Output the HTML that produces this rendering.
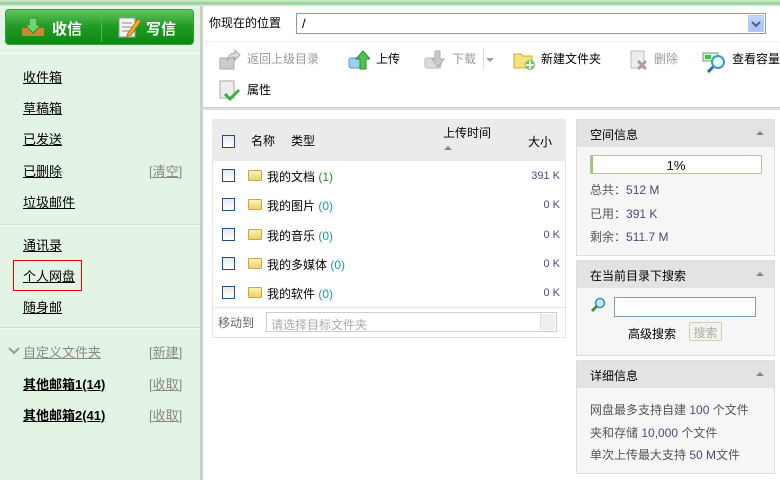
<!DOCTYPE html>
<html><head><meta charset="utf-8"><style>
*{margin:0;padding:0;box-sizing:border-box}
body{width:780px;height:480px;overflow:hidden;font-family:"Liberation Sans","Noto Sans CJK SC",sans-serif;font-size:12px;color:#000;background:#fff;position:relative}
.a{position:absolute}
u{text-decoration:underline}
.side{left:0;top:0;width:200px;height:480px;background:#e4f4e4}
.vline{left:200px;top:0;width:3px;height:480px;background:#c9cfc9}
.topg{left:0;top:0;width:780px;height:6px;background:linear-gradient(#d4ecd4,#8fd08f 60%,#d8f0d8)}
.btns{left:5px;top:9px;width:189px;height:36px;border-radius:4px;background:linear-gradient(#5fc45f,#1f9a22 50%,#0c8a12);border:1px solid #3a9c3a;color:#fff;font-size:15px;font-weight:bold}
.nav{left:23px;font-size:13px;color:#000;text-decoration:underline}
.hr{left:0;width:200px;height:2px;background:#f4fbf4;border-top:1px solid #cfe3cf}
.br{color:#888;font-size:13px}
.tb{font-size:12px;color:#000}
.g{color:#999}
.chk{width:13px;height:13px;border:1px solid #1f4e8c;background:linear-gradient(#e8e8e8,#fff)}
.fold{width:14px;height:11px;background:linear-gradient(#fdf2b0,#ecd06a);border:1px solid #c8a840;border-radius:1px}
.row{left:212px;width:354px;height:29px}
.panel{left:576px;width:199px;background:#f6f6f6;border:1px solid #ddd}
.ph{height:27px;background:#e3e3e3;padding:6px 0 0 13px;font-size:12px}
.tri{position:absolute;right:10px;top:11px;width:0;height:0;border-left:4px solid transparent;border-right:4px solid transparent;border-bottom:4px solid #888}
.blue{color:#4a4a7a}
</style></head><body>
<div class="a side"></div>
<div class="a vline"></div>
<div class="a topg"></div>
<div class="a btns">
 <div class="a" style="left:95px;top:2px;width:1px;height:30px;background:#54b154"></div>
 <svg class="a" style="left:14px;top:6px" width="26" height="22"><path d="M2 12h22v8H2z" fill="#c98a2e"/><path d="M9 2h8v7h4l-8 8-8-8h4z" fill="#6fd36f" stroke="#2a8a2a"/></svg>
 <span class="a" style="left:46px;top:8px">收信</span>
 <svg class="a" style="left:110px;top:5px" width="26" height="24"><rect x="3" y="3" width="16" height="19" fill="#f4f4f4" stroke="#999"/><path d="M6 8h10M6 12h10M6 16h8" stroke="#888"/><path d="M12 18l10-14 3 2-10 14-4 1z" fill="#f2b030" stroke="#b07010"/></svg>
 <span class="a" style="left:140px;top:8px">写信</span>
</div>
<div class="a" style="left:0;top:52px;width:200px;height:2px;background:#f2faf2"></div>
<div class="a nav" style="top:67px">收件箱</div>
<div class="a nav" style="top:98px">草稿箱</div>
<div class="a nav" style="top:129px">已发送</div>
<div class="a nav" style="top:161px">已删除</div><div class="a br" style="left:149px;top:161px">[<u>清空</u>]</div>
<div class="a nav" style="top:192px">垃圾邮件</div>
<div class="a hr" style="top:224px"></div>
<div class="a nav" style="top:235px">通讯录</div>
<div class="a" style="left:13px;top:260px;width:69px;height:31px;border:1px solid #e00"></div>
<div class="a nav" style="top:266px">个人网盘</div>
<div class="a nav" style="top:297px">随身邮</div>
<div class="a hr" style="top:327px"></div>
<svg class="a" style="left:8px;top:347px" width="12" height="8"><path d="M1 1l5 5 5-5" stroke="#999" stroke-width="2" fill="none"/></svg>
<div class="a nav" style="top:342px;color:#888">自定义文件夹</div><div class="a br" style="left:149px;top:342px">[<u>新建</u>]</div>
<div class="a nav" style="top:374px;font-weight:bold">其他邮箱1(14)</div><div class="a br" style="left:149px;top:374px">[<u>收取</u>]</div>
<div class="a nav" style="top:405px;font-weight:bold">其他邮箱2(41)</div><div class="a br" style="left:149px;top:405px">[<u>收取</u>]</div>

<div class="a" style="left:209px;top:14px;font-size:12px">你现在的位置</div>
<div class="a" style="left:296px;top:13px;width:470px;height:21px;border:1px solid #7f9db9;padding:2px 5px;font-size:13px">/
 <div class="a" style="right:1px;top:1px;width:16px;height:17px;background:linear-gradient(#c6d6fb,#a8bff5);border:1px solid #b4c8f4"><svg width="14" height="15"><path d="M3 6l4 4 4-4" stroke="#4d6185" stroke-width="2" fill="none"/></svg></div></div>
<div class="a" style="left:202px;top:41px;width:578px;height:1px;background:#eee"></div>

<svg class="a" style="left:219px;top:49px" width="22" height="22"><rect x="1" y="9" width="14" height="11" fill="#ccc" stroke="#aaa"/><path d="M8 12q2-8 8-8v-3l5 5-5 5v-3q-5 0-8 4z" fill="#ddd" stroke="#aaa"/></svg>
<div class="a tb g" style="left:247px;top:50px">返回上级目录</div>
<svg class="a" style="left:348px;top:49px" width="22" height="22"><rect x="1" y="9" width="14" height="10" rx="2" fill="#9cd0f0" stroke="#5a9acb"/><path d="M12 20V10H8l7-8 7 8h-4v10z" fill="#4fc44f" stroke="#2a8a2a"/></svg>
<div class="a tb" style="left:376px;top:50px">上传</div>
<svg class="a" style="left:424px;top:49px" width="22" height="22"><rect x="1" y="9" width="16" height="10" rx="2" fill="#ddd" stroke="#bbb"/><path d="M11 2h5v8h4l-6 8-6-8h3z" fill="#ccc" stroke="#aaa"/></svg>
<div class="a tb g" style="left:452px;top:50px">下载</div>
<div class="a" style="left:483px;top:48px;width:1px;height:22px;background:#ddd"></div>
<div class="a" style="left:486px;top:58px;border-left:4px solid transparent;border-right:4px solid transparent;border-top:4px solid #999"></div>
<svg class="a" style="left:513px;top:49px" width="24" height="22"><path d="M1 5h7l2 2h9v12H1z" fill="#f7e27a" stroke="#c8a840"/><circle cx="17" cy="16" r="5" fill="#5ccc5c"/><path d="M17 12v8M13 16h8" stroke="#fff" stroke-width="2"/></svg>
<div class="a tb" style="left:541px;top:50px">新建文件夹</div>
<svg class="a" style="left:629px;top:49px" width="22" height="22"><rect x="2" y="2" width="13" height="17" fill="#eee" stroke="#bbb"/><path d="M9 12l8 8M17 12l-8 8" stroke="#b99" stroke-width="3"/></svg>
<div class="a tb g" style="left:654px;top:50px">删除</div>
<svg class="a" style="left:702px;top:49px" width="26" height="24"><rect x="1" y="4" width="15" height="8" fill="#cfd" stroke="#888"/><rect x="3" y="6" width="6" height="4" fill="#3c3"/><circle cx="16" cy="13" r="6" fill="#dff" stroke="#4a90c0" stroke-width="2"/><path d="M11 18l-5 5" stroke="#2a6ab0" stroke-width="3"/></svg>
<div class="a tb" style="left:732px;top:50px">查看容量</div>
<svg class="a" style="left:219px;top:80px" width="22" height="22"><rect x="1" y="1" width="14" height="17" fill="#eee" stroke="#aaa"/><path d="M6 14l5 5 9-9" stroke="#3bb33b" stroke-width="3" fill="none"/></svg>
<div class="a tb" style="left:247px;top:81px">属性</div>
<div class="a" style="left:202px;top:107px;width:578px;height:3px;background:#e0e0e0;border-top:1px solid #ccc"></div>

<div class="a" style="left:212px;top:119px;width:354px;height:219px;border:1px solid #e3e3e3"></div>
<div class="a" style="left:212px;top:119px;width:354px;height:42px;background:#ebebeb"></div>
<div class="a chk" style="left:222px;top:135px"></div>
<div class="a" style="left:251px;top:132px">名称</div>
<div class="a" style="left:291px;top:132px">类型</div>
<div class="a" style="left:443px;top:124px">上传时间</div>
<div class="a" style="left:444px;top:146px;border-left:4px solid transparent;border-right:4px solid transparent;border-bottom:4px solid #888"></div>
<div class="a" style="left:528px;top:133px">大小</div>

<div class="a row" style="top:161px"><div class="a chk" style="left:10px;top:8px"></div><div class="a fold" style="left:36px;top:9px"></div><div class="a" style="left:55px;top:7px">我的文档 <span style="color:#2a8a2a">(1)</span></div><div class="a blue" style="right:6px;top:9px;font-size:11px">391 K</div></div>
<div class="a row" style="top:190px"><div class="a chk" style="left:10px;top:8px"></div><div class="a fold" style="left:36px;top:9px"></div><div class="a" style="left:55px;top:7px">我的图片 <span style="color:#1a9aa0">(0)</span></div><div class="a blue" style="right:6px;top:9px;font-size:11px">0 K</div></div>
<div class="a row" style="top:220px"><div class="a chk" style="left:10px;top:8px"></div><div class="a fold" style="left:36px;top:9px"></div><div class="a" style="left:55px;top:7px">我的音乐 <span style="color:#1a9aa0">(0)</span></div><div class="a blue" style="right:6px;top:9px;font-size:11px">0 K</div></div>
<div class="a row" style="top:249px"><div class="a chk" style="left:10px;top:8px"></div><div class="a fold" style="left:36px;top:9px"></div><div class="a" style="left:55px;top:7px">我的多媒体 <span style="color:#1a9aa0">(0)</span></div><div class="a blue" style="right:6px;top:9px;font-size:11px">0 K</div></div>
<div class="a row" style="top:278px"><div class="a chk" style="left:10px;top:8px"></div><div class="a fold" style="left:36px;top:9px"></div><div class="a" style="left:55px;top:7px">我的软件 <span style="color:#1a9aa0">(0)</span></div><div class="a blue" style="right:6px;top:9px;font-size:11px">0 K</div></div>
<div class="a" style="left:213px;top:307px;width:352px;height:1px;background:#e3e3e3"></div>
<div class="a" style="left:218px;top:314px;color:#666">移动到</div>
<div class="a" style="left:266px;top:312px;width:291px;height:20px;border:1px solid #ccc;color:#aaa;padding:3px 4px;background:#fff">请选择目标文件夹<div class="a" style="right:1px;top:1px;width:15px;height:16px;background:#eee;border-left:1px solid #ddd"></div></div>

<div class="a panel" style="top:119px;height:137px"><div class="ph" style="position:relative">空间信息<div class="tri"></div></div>
 <div class="a" style="left:13px;top:35px;width:172px;height:19px;border:1px solid #b7c4a4;background:#fff;text-align:center;padding-top:2px;font-size:13px"><div class="a" style="left:0;top:0;width:2px;height:17px;background:#9c6"></div>1%</div>
 <div class="a" style="left:13px;top:61px;color:#555">总共：<span class="blue">512 M</span></div>
 <div class="a" style="left:13px;top:85px;color:#555">已用：<span class="blue">391 K</span></div>
 <div class="a" style="left:13px;top:108px;color:#555">剩余：<span class="blue">511.7 M</span></div>
</div>
<div class="a panel" style="top:260px;height:96px"><div class="ph" style="position:relative">在当前目录下搜索<div class="tri"></div></div>
 <svg class="a" style="left:13px;top:36px" width="16" height="16"><circle cx="10" cy="6" r="4.5" fill="#bfe8ff" stroke="#3a8ac0" stroke-width="1.5"/><path d="M7 9l-5 5" stroke="#3a9a3a" stroke-width="3"/></svg>
 <div class="a" style="left:37px;top:36px;width:142px;height:20px;border:1px solid #7f9db9;background:#fff"></div>
 <div class="a" style="left:51px;top:64px">高级搜索</div>
 <div class="a" style="left:112px;top:61px;width:33px;height:19px;border:1px solid #cfcfb8;border-radius:2px;background:#f4f4ec;color:#aaa;text-align:center;padding-top:1px">搜索</div>
</div>
<div class="a panel" style="top:360px;height:114px"><div class="ph" style="position:relative">详细信息<div class="tri"></div></div>
 <div class="a" style="left:13px;top:38px;color:#555;line-height:22.5px">网盘最多支持自建 <span class="blue">100</span> 个文件<br>夹和存储 <span class="blue">10,000</span> 个文件<br>单次上传最大支持 <span class="blue">50 M</span>文件</div>
</div>
</body></html>
